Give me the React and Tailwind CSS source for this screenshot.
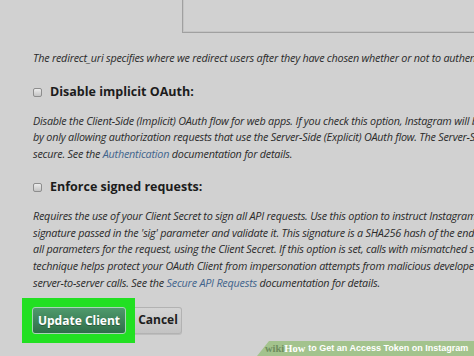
import React from "react";

const body = "text-[10.8px] leading-[16.7px] tracking-[-0.22px] italic text-[#2a2a2a] whitespace-nowrap";

function Check({ label }) {
  return (
    <div className="flex items-center h-[20px]">
      <span className="w-[9px] h-[9px] rounded-[2px] border border-[#8d8d8d] bg-gradient-to-b from-[#ececec] to-[#c4c4c4]" />
      <span className="ml-[8px] text-[12.5px] font-bold text-[#1c1c1c]">{label}</span>
    </div>
  );
}

export default function App() {
  const link = "text-[#41648c]";
  return (
    <div
      className="relative w-[474px] h-[356px] overflow-hidden bg-[#d1d1d1]"
      style={{ fontFamily: '"Open Sans", "Noto Sans", sans-serif' }}
    >
      <div className="ml-[182px] h-[33px] border-l border-b border-[#a0a0a0] shadow-[inset_1px_-1px_0_#c4c4c4]" />

      <div className="pl-[33px]">
        <p className={`${body} mt-[17px]`}>
          The redirect_uri specifies where we redirect users after they have chosen whether or not to authenticate your application.
        </p>

        <div className="mt-[15.6px]">
          <Check label="Disable implicit OAuth:" />
        </div>

        <div className="mt-[10.3px]">
          <p className={body}>
            Disable the Client-Side (Implicit) OAuth flow for web apps. If you check this option, Instagram will better protect your application
          </p>
          <p className={body}>
            by only allowing authorization requests that use the Server-Side (Explicit) OAuth flow. The Server-Side flow is considered more
          </p>
          <p className={body}>
            secure. See the <span className={link}>Authentication</span> documentation for details.
          </p>
        </div>

        <div className="mt-[14.3px]">
          <Check label="Enforce signed requests:" />
        </div>

        <div className="mt-[11px]">
          <p className={body}>
            Requires the use of your Client Secret to sign all API requests. Use this option to instruct Instagram to verify the
          </p>
          <p className={body}>
            signature passed in the 'sig' parameter and validate it. This signature is a SHA256 hash of the endpoint path and
          </p>
          <p className={body}>
            all parameters for the request, using the Client Secret. If this option is set, calls with mismatched signatures will fail. This
          </p>
          <p className={body}>
            technique helps protect your OAuth Client from impersonation attempts from malicious developers and is only available for
          </p>
          <p className={body}>
            server-to-server calls. See the <span className={link}>Secure API Requests</span> documentation for details.
          </p>
        </div>
      </div>

      <div className="flex items-start mt-[6px] ml-[22px]">
        <div className="bg-[#22e022] pt-[9px] pb-[9px] pl-[10px] pr-[9px]">
          <button className="w-[94px] h-[27px] rounded-[3px] border border-[#a9d3b6] bg-gradient-to-b from-[#4f9a6c] to-[#2f6e4a] text-white text-[12px] font-bold [text-shadow:0_1px_0_#2a5a3c]">
            Update Client
          </button>
        </div>
        <button className="mt-[9px] w-[47px] h-[27px] rounded-r-[3px] border border-[#b2b2b2] border-l-0 bg-gradient-to-b from-[#d4d4d4] to-[#c3c3c3] text-[#1e1e1e] text-[12px] font-bold shadow-[0_1px_0_#bdbdbd]">
          Cancel
        </button>
      </div>

      <div className="absolute left-[257px] right-0 top-[341px] h-[15px] bg-[#a3c38d] [clip-path:polygon(12px_0,100%_0,100%_100%,0_100%)] flex items-center pl-[8px] text-[9px] font-bold text-white whitespace-nowrap" style={{ fontFamily: '"Liberation Sans", Arial, sans-serif' }}>
        <span className="text-[#6e8d5e] font-bold" style={{ fontFamily: '"Liberation Serif", serif', fontSize: "10.5px" }}>wiki</span>
        <span className="font-bold" style={{ fontFamily: '"Liberation Serif", serif', fontSize: "10.5px" }}>How</span>
        <span className="ml-[3px]">to Get an Access Token on Instagram</span>
      </div>
    </div>
  );
}
